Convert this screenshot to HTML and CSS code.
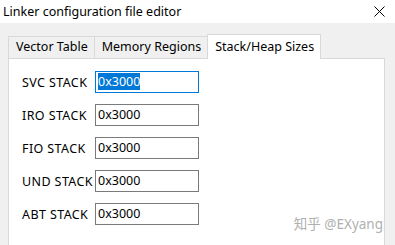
FILE: index.html
```html
<!DOCTYPE html>
<html>
<head>
    <link rel="stylesheet" href="styles.css">
</head>
<body>
    <div class="window">
        <div class="titlebar">
            <span class="title">Linker configuration file editor</span>
            <svg class="close" width="11" height="11" viewBox="0 0 11 11">
                <path d="M0.5 0.5 L10.5 10.5 M10.5 0.5 L0.5 10.5" stroke="#000" stroke-width="1"/>
            </svg>
        </div>
        <div class="client">
            <div class="tabs">
                <div class="tab tab-first">Vector Table</div>
                <div class="tab">Memory Regions</div>
                <div class="tab active">Stack/Heap Sizes</div>
            </div>
            <div class="panel">
                <div class="row">
                    <label>SVC STACK</label>
                    <div class="field focused"><span class="sel">0x3000</span></div>
                </div>
                <div class="row">
                    <label>IRO STACK</label>
                    <div class="field">0x3000</div>
                </div>
                <div class="row">
                    <label>FIO STACK</label>
                    <div class="field">0x3000</div>
                </div>
                <div class="row">
                    <label>UND STACK</label>
                    <div class="field">0x3000</div>
                </div>
                <div class="row">
                    <label>ABT STACK</label>
                    <div class="field">0x3000</div>
                </div>
            </div>
        </div>
        <div class="watermark">知乎 @EXyang</div>
    </div>
</body>
</html>
```

FILE: styles.css
```css
* {
    box-sizing: border-box;
}
html, body {
    margin: 0;
    height: 100%;
    overflow: hidden;
}
body {
    font-family: "Noto Sans", "Noto Sans CJK SC", sans-serif;
    font-size: 12px;
    color: #000;
    background: #f0f0f0;
}
.window {
    position: relative;
    height: 245px;
}
.titlebar {
    height: 23px;
    background: #fff;
    display: flex;
    align-items: center;
    justify-content: space-between;
    padding: 0 10px 0 3px;
}
.title {
    font-size: 12.5px;
}
.client {
    padding: 10px 10px 0 8px;
    height: 222px;
    display: flex;
    flex-direction: column;
}
.tabs {
    display: flex;
    align-items: flex-end;
    height: 25px;
}
.tab {
    height: 22px;
    line-height: 20px;
    border: 1px solid #d9d9d9;
    border-bottom: none;
    border-left: none;
    background: #f0f0f0;
    padding: 0 6px 0 7px;
    font-size: 12.5px;
}
.tab-first {
    border-left: 1px solid #d9d9d9;
}
.tab.active {
    height: 25px;
    line-height: 23px;
    background: #fff;
    border-left: 1px solid #d9d9d9;
    margin-left: -1px;
    padding: 0 6px 0 7px;
    position: relative;
    margin-bottom: -1px;
    z-index: 1;
}
.panel {
    flex: 1;
    background: #fff;
    border: 1px solid #d9d9d9;
    border-bottom: none;
    padding: 12px 0 0 13px;
}
.row {
    display: flex;
    align-items: center;
    height: 22px;
    margin-bottom: 11px;
}
.row label {
    width: 73px;
    font-size: 12.5px;
    letter-spacing: 0.4px;
    white-space: nowrap;
}
.field {
    width: 104px;
    height: 22px;
    border: 1px solid #7a7a7a;
    padding: 0 2px;
    line-height: 20px;
    font-size: 12.5px;
}
.field.focused {
    border-color: #0078d7;
}
.sel {
    background: #0078d7;
    color: #fff;
}
.watermark {
    position: absolute;
    right: 12px;
    bottom: 12px;
    color: #b0b0b0;
    font-size: 13.5px;
    text-shadow: 0 0 1px #fff;
}
```
